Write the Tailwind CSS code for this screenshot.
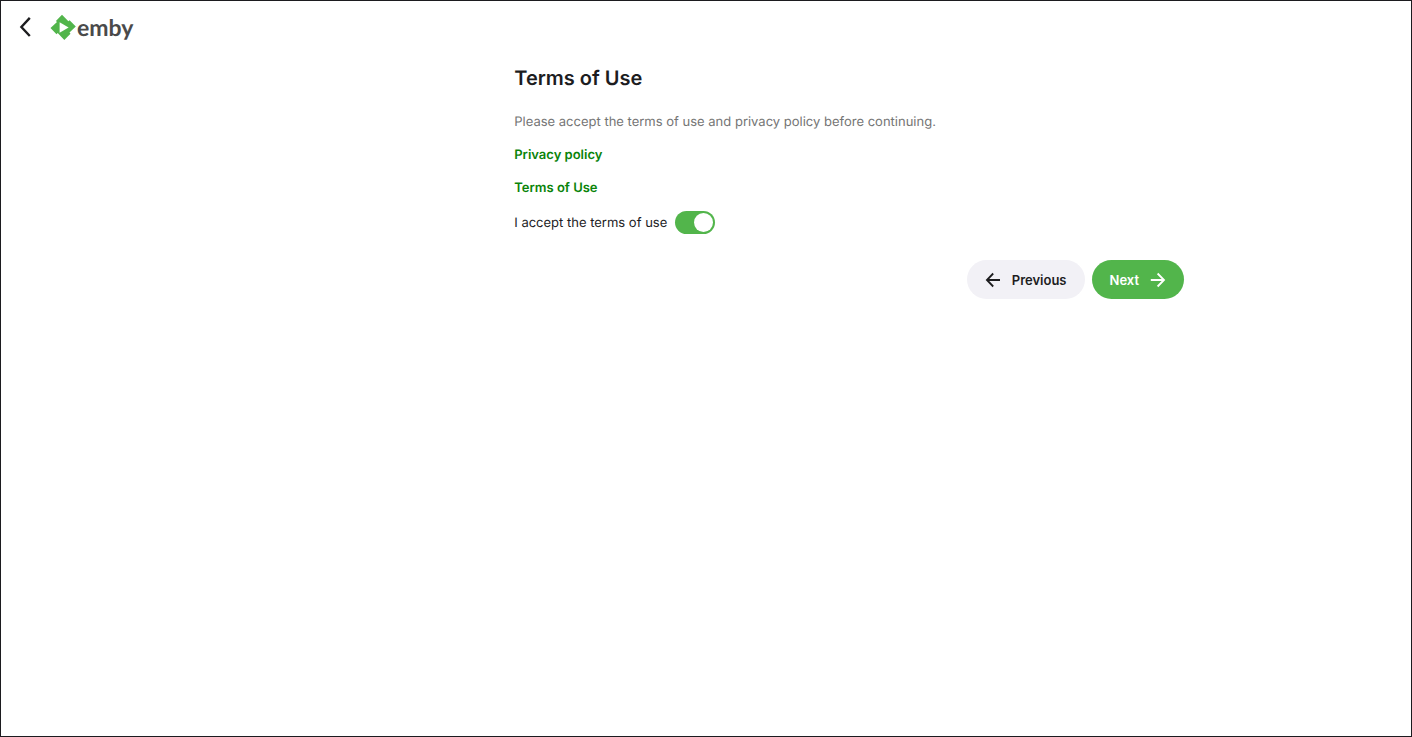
<!DOCTYPE html>
<html lang="en">

<head>
    <meta charset="UTF-8" />
    <meta name="viewport" content="width=device-width, initial-scale=1.0" />
    <title>Emby - Terms of Use</title>
    <script src="https://cdn.jsdelivr.net/npm/@tailwindcss/browser@4"></script>
</head>

<body class="min-h-screen border border-[#1c1b1f] bg-white font-['Inter',sans-serif] text-[13px] leading-5 text-[#1d1d1f] [text-rendering:geometricPrecision]">

    <!-- Header -->
    <header class="flex h-[52px] items-center gap-[13px] px-3">
        <button type="button" aria-label="Back" class="flex size-6 items-center justify-center">
            <svg class="size-6" viewBox="0 0 24 24" fill="none" stroke="currentColor" stroke-width="2.4">
                <path d="M16.800 2.900 8.400 12l8.400 9" />
            </svg>
        </button>
        <a href="#" class="flex items-center gap-px">
            <svg class="size-[26px]" viewBox="0 0 26 26">
                <path fill="#52b54b" d="M12 0.800 5.900 6.900 7 8 0.500 14.100 6.500 20.200 7.700 19.100 14.300 25.900 20.500 19.700 19.500 18.600 25.800 12.400 19.600 6.200 18.400 7.300Z" />
                <path fill="#fff" d="M9.600 8.300v10.400l9-5.200z" />
            </svg>
            <span class="font-['Lato',sans-serif] text-[23px] leading-6 font-bold text-[#4a4a4a]">emby</span>
        </a>
    </header>

    <!-- Terms form -->
    <main class="pt-[13px] pr-[16.100%] pl-[36.400%]">
        <form>
            <h1 class="text-[20px] leading-6 font-semibold">Terms of Use</h1>
            <p class="mt-[22px] text-[#757575]">Please accept the terms of use and privacy policy before continuing.</p>
            <p class="mt-[13px]"><a href="#" class="font-semibold text-[#0a840a]">Privacy policy</a></p>
            <p class="mt-[13px]"><a href="#" class="font-semibold text-[#0a840a]">Terms of Use</a></p>

            <label class="mt-[13px] flex items-center gap-2">
                <span>I accept the terms of use</span>
                <input type="checkbox" role="switch" checked
                    class="flex h-[23px] w-10 appearance-none items-center rounded-full bg-[#b0b0b0] px-[2px] before:size-[19px] before:rounded-full before:bg-white checked:justify-end checked:bg-[#52b54b]" />
            </label>

            <div class="mt-[26px] flex justify-end gap-[7px]">
                <button type="button" class="flex h-[39px] items-center gap-[11px] rounded-full bg-[#f2f1f6] px-[18px] font-semibold">
                    <svg class="size-4" viewBox="0 0 16 16" fill="none" stroke="currentColor" stroke-width="1.800">
                        <path d="M15 8H2M8.200 1.500 1.900 8l6.300 6.500" />
                    </svg>
                    Previous
                </button>
                <button type="submit" class="flex h-[39px] items-center gap-[11px] rounded-full bg-[#52b54b] px-[18px] font-semibold text-white">
                    Next
                    <svg class="size-4" viewBox="0 0 16 16" fill="none" stroke="currentColor" stroke-width="1.800">
                        <path d="M0.800 8h13M7.600 1.500 14 8l-6.400 6.500" />
                    </svg>
                </button>
            </div>
        </form>
    </main>
</body>

</html>
